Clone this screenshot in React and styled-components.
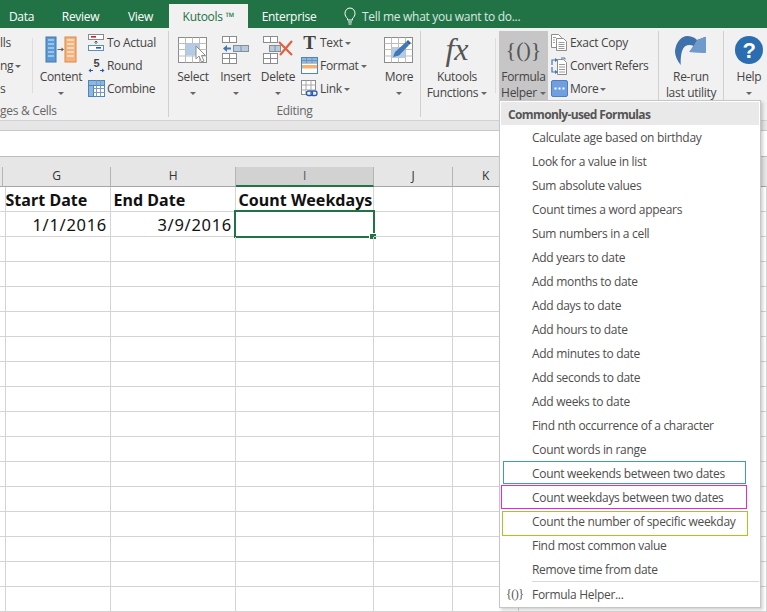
import React from "react";
import styled, { createGlobalStyle } from "styled-components";

const Global = createGlobalStyle`
  html, body { margin: 0; padding: 0; background: #fff; }
  * { box-sizing: border-box; }
`;

const UI = `"Open Sans", "Noto Sans", sans-serif`;

const Page = styled.div`
  position: relative;
  width: 767px;
  height: 612px;
  overflow: hidden;
  font-family: ${UI};
  font-size: 12px;
  letter-spacing: -0.3px;
  color: #444;
`;

const TabBar = styled.div`
  height: 28px;
  background: #217346;
  display: flex;
  align-items: flex-end;
  color: #fff;
`;
const Tab = styled.div`
  width: ${(p) => p.$w}px;
  margin-left: ${(p) => p.$ml || 0}px;
  height: 24px;
  display: flex;
  align-items: center;
  justify-content: center;
  background: ${(p) => (p.$active ? "#f1f1f1" : "transparent")};
  color: ${(p) => (p.$active ? "#217346" : "#fff")};
`;
const TellMe = styled.div`
  margin-left: 14px;
  height: 24px;
  display: flex;
  align-items: center;
  gap: 6px;
  color: #dbe9e1;
  white-space: nowrap;
`;

const Ribbon = styled.div`
  height: 93px;
  background: #f1f1f1;
  border-bottom: 1px solid #d2d2d2;
  display: flex;
  align-items: stretch;
`;
const Group = styled.div`
  width: ${(p) => p.$w}px;
  flex: none;
  display: flex;
  flex-direction: column;
  position: relative;
  overflow: hidden;
`;
const GroupBody = styled.div`
  height: 72px;
  margin-top: 3px;
  display: flex;
  align-items: flex-start;
`;
const GroupLabel = styled.div`
  height: 17px;
  line-height: 16px;
  display: flex;
  white-space: nowrap;
  color: #666;
  justify-content: ${(p) => (p.$start ? "flex-start" : "center")};
`;
const Divider = styled.div`
  width: 1px;
  flex: none;
  margin: 3px 0 3px;
  background: #d0d0d0;
`;
const SoftDivider = styled.div`
  width: 1px;
  height: 55px;
  flex: none;
  margin-top: 7px;
  margin-left: ${(p) => p.$ml || 0}px;
  background: #dcdcdc;
`;
const Large = styled.div`
  width: ${(p) => p.$w}px;
  margin-left: ${(p) => p.$ml || 0}px;
  height: 69px;
  flex: none;
  display: flex;
  flex-direction: column;
  align-items: center;
  background: ${(p) => (p.$on ? "#c6c6c6" : "transparent")};
`;
const LargeIcon = styled.div`
  height: 38px;
  display: flex;
  align-items: center;
  justify-content: center;
  flex: none;
`;
const LargeLine = styled.div`
  height: 16px;
  line-height: 16px;
  display: flex;
  align-items: center;
  justify-content: center;
  gap: 3px;
  white-space: nowrap;
`;
const Caret = styled.span`
  display: inline-block;
  width: 0;
  height: 0;
  border-left: 3px solid transparent;
  border-right: 3px solid transparent;
  border-top: 3px solid #666;
  margin-top: 1px;
`;
const Stack = styled.div`
  width: ${(p) => p.$w}px;
  margin-left: ${(p) => p.$ml || 0}px;
  flex: none;
  display: flex;
  flex-direction: column;
  overflow: hidden;
`;
const SmallRow = styled.div`
  height: 23px;
  display: flex;
  align-items: center;
  gap: 2px;
  white-space: nowrap;
`;
const SmallIcon = styled.span`
  width: 17px;
  height: 17px;
  flex: none;
  display: flex;
  align-items: center;
  justify-content: center;
`;
const SerifGlyph = styled.span`
  font-family: "Liberation Serif", serif;
  font-weight: ${(p) => p.$weight || 400};
  font-style: ${(p) => (p.$italic ? "italic" : "normal")};
  font-size: ${(p) => p.$size}px;
  line-height: 1;
  letter-spacing: 0;
  margin-top: ${(p) => p.$mt || 0}px;
  color: ${(p) => p.$c || "#555"};
`;

const Strip = styled.div`
  height: 10px;
  background: #e6e6e6;
  border-bottom: 1px solid #c8c8c8;
`;
const FormulaBar = styled.div`
  height: 26px;
  background: #fff;
  border-bottom: 1px solid #bdbdbd;
`;
const HeaderGap = styled.div`
  height: 10px;
  background: #e6e6e6;
`;
const Grid = styled.div`
  display: grid;
  grid-template-columns: 3px 108px 125px 138px 79px 66px 1fr;
`;
const ColHead = styled.div`
  height: 20px;
  line-height: 18px;
  background: ${(p) => (p.$sel ? "#d2d2d2" : "#e6e6e6")};
  border-right: 1px solid ${(p) => (p.$last ? "transparent" : "#b4b4b4")};
  border-bottom: ${(p) => (p.$sel ? "2px solid #217346" : "1px solid #a6a6a6")};
  text-align: center;
  font-size: 12px;
  color: ${(p) => (p.$sel ? "#555" : "#333")};
`;
const Cell = styled.div`
  position: relative;
  height: 25px;
  border-right: 1px solid #d4d4d4;
  border-bottom: 1px solid #d4d4d4;
  padding: 0 ${(p) => (p.$num ? 3 : 2.5)}px;
  line-height: 26px;
  font-family: "Noto Sans", "Open Sans", sans-serif;
  font-size: ${(p) => (p.$bold ? 16 : 16.5)}px;
  letter-spacing: ${(p) => (p.$bold ? "0.05px" : "0.7px")};
  font-weight: ${(p) => (p.$bold ? 700 : 400)};
  color: #111;
  text-align: ${(p) => (p.$num ? "right" : "left")};
  white-space: nowrap;
`;
const CellCursor = styled.div`
  position: absolute;
  top: -2px;
  left: -2px;
  right: -2px;
  bottom: -2px;
  border: 2px solid #217346;
`;
const FillHandle = styled.div`
  position: absolute;
  right: -3px;
  bottom: -3px;
  width: 6px;
  height: 5px;
  background: #217346;
  outline: 1px solid #fff;
`;

const Menu = styled.div`
  position: absolute;
  left: 499px;
  top: 100px;
  width: 262px;
  height: 508px;
  background: #fff;
  border: 1px solid #c6c6c6;
  padding: 1px;
  box-shadow: 2px 2px 3px rgba(0, 0, 0, 0.18);
`;
const MenuHeader = styled.div`
  height: 23px;
  line-height: 25px;
  padding-left: 7px;
  background: #e9e9e9;
  font-weight: 700;
  letter-spacing: -0.62px;
  color: #555;
`;
const MenuItem = styled.div`
  position: relative;
  height: 24px;
  line-height: 25px;
  padding-left: 31px;
  color: #4d4d4d;
  white-space: nowrap;
`;
const Ring = styled.div`
  position: absolute;
  left: ${(p) => p.$l}px;
  top: ${(p) => p.$t}px;
  width: ${(p) => p.$w}px;
  height: ${(p) => p.$h}px;
  border: 1px solid ${(p) => p.$c};
`;
const MenuSep = styled.div`
  height: 1px;
  margin-left: 31px;
  background: #d9d9d9;
`;
const FootIcon = styled.span`
  position: absolute;
  left: 5px;
  top: 0;
  font-family: "Liberation Serif", serif;
  font-size: 12px;
  letter-spacing: -0.5px;
  color: #555;
`;

const ContentIcon = () => (
  <svg width="32" height="28" viewBox="0 0 32 28">
    <rect x="1" y="1" width="10" height="25" fill="#5b9bd5" stroke="#3e78b0" />
    {[4, 8, 12, 16, 20].map((y) => <rect key={y} x="3" y={y - 1} width="6" height="2" fill="#9cc3e6" />)}
    <rect x="20" y="1" width="11" height="25" fill="#f4b183" stroke="#e08a3c" />
    {[4, 8, 12, 16, 20].map((y) => <rect key={y} x="22" y={y - 1} width="7" height="2" fill="#f9d9b0" />)}
    <path d="M12.5 13.5h5" stroke="#666" />
    <path d="M19 13.5l-2.5-2v4z" fill="#555" />
  </svg>
);
const ToActualIcon = () => (
  <svg width="17" height="17" viewBox="0 0 17 17">
    <rect x=".5" y=".5" width="15" height="5" fill="#fff" stroke="#8a8a8a" />
    <rect x="3" y="2" width="5" height="1.6" fill="#c8242b" />
    <rect x=".5" y="11.5" width="15" height="5" fill="#fff" stroke="#5b8ec4" />
    <rect x="8" y="13" width="5" height="1.6" fill="#2a5caa" />
    <path d="M8 10V7M6.5 8.5L8 7l1.5 1.5" stroke="#555" fill="none" />
  </svg>
);
const RoundIcon = () => (
  <svg width="17" height="17" viewBox="0 0 17 17">
    <text x="8.5" y="10" textAnchor="middle" fontFamily="Liberation Sans" fontWeight="700" fontSize="11" fill="#444">5</text>
    <path d="M2 13.5h3M12 13.5h3" stroke="#2a5caa" />
    <path d="M.5 13.5l2.5-2v4zM16.5 13.5l-2.5-2v4z" fill="#2a5caa" />
  </svg>
);
const CombineIcon = () => (
  <svg width="17" height="17" viewBox="0 0 17 17">
    <rect x=".5" y=".5" width="16" height="16" fill="#fff" stroke="#4a86c0" />
    <rect x=".5" y=".5" width="5" height="16" fill="#8fb6dc" stroke="#4a86c0" />
    <rect x=".5" y=".5" width="16" height="5" fill="#8fb6dc" stroke="#4a86c0" />
    <path d="M5.5 8.5h11M5.5 12.5h11M8.5 5.5v11M12.5 5.5v11M8.5.5v5M12.5.5v5" stroke="#7a9cc0" fill="none" />
  </svg>
);
const GridBase = ({ children }) => (
  <svg width="30" height="27" viewBox="0 0 30 27">
    <rect x=".5" y=".5" width="28" height="25" fill="#fff" stroke="#8c8c8c" />
    <path d="M.5 6.5h28M.5 12.5h28M.5 19h28M7.5.5v25M14.5.5v25M21.5.5v25" stroke="#bdbdbd" fill="none" />
    {children}
  </svg>
);
const SelectIcon = () => (
  <GridBase>
    <rect x="7.5" y="6.5" width="14" height="12" fill="#b3cbe3" />
    <path d="M18 9v13l3-3 2.5 6 2.5-1-2.5-5.5H27.5z" fill="#fff" stroke="#8c8c8c" strokeLinejoin="round" />
  </GridBase>
);
const MoreIcon = () => (
  <GridBase>
    <rect x="7.5" y="10" width="14" height="11" fill="#b3cbe3" />
    <path d="M9 20l2-5L22 5l3 3-10 10.5z" fill="#3f78b5" />
    <path d="M22 5l2-2 3 3-2 2z" fill="#2f66a3" />
  </GridBase>
);
const InsertIcon = () => (
  <svg width="27" height="28" viewBox="0 0 27 28">
    <rect x=".5" y=".5" width="14" height="6" fill="#fff" stroke="#8c8c8c" />
    <path d="M7.5.5v6" stroke="#8c8c8c" />
    <rect x="11.5" y="9.5" width="15" height="6" fill="#b3cbe3" stroke="#8c8c8c" />
    <path d="M19 9.5v6" stroke="#8c8c8c" />
    <path d="M3 12.5h6" stroke="#3f78b5" strokeWidth="2" />
    <path d="M1 12.5l4-3.5v7z" fill="#3f78b5" />
    <rect x=".5" y="17.5" width="14" height="10" fill="#fff" stroke="#8c8c8c" />
    <path d="M7.5 17.5v10M.5 22.5h14" stroke="#8c8c8c" />
  </svg>
);
const DeleteIcon = () => (
  <svg width="31" height="28" viewBox="0 0 31 28">
    <rect x=".5" y=".5" width="14" height="6" fill="#fff" stroke="#8c8c8c" />
    <path d="M7.5.5v6" stroke="#8c8c8c" />
    <rect x="6.5" y="9.5" width="11" height="6" fill="#b3cbe3" stroke="#8c8c8c" />
    <path d="M12 9.5v6" stroke="#8c8c8c" />
    <rect x=".5" y="17.5" width="14" height="10" fill="#fff" stroke="#8c8c8c" />
    <path d="M7.5 17.5v10M.5 22.5h14" stroke="#8c8c8c" />
    <path d="M16 6l13 13M29 5L17 19" stroke="#e0603f" strokeWidth="2.2" />
  </svg>
);
const FormatIcon = () => (
  <svg width="17" height="17" viewBox="0 0 17 17">
    <rect x=".5" y=".5" width="16" height="16" fill="#fff" stroke="#4a86c0" />
    <rect x="1" y="1" width="15" height="5" fill="#8fb6dc" />
    <path d="M1 3.5h15M5.5 1v5M11 1v5" stroke="#6a94c0" />
    <rect x="1" y="8" width="15" height="3.5" fill="#f4b26b" />
    <rect x="1" y="6" width="15" height="1" fill="#c0c0c0" />
  </svg>
);
const LinkIcon = () => (
  <svg width="17" height="17" viewBox="0 0 17 17">
    <rect x=".5" y=".5" width="14" height="14" fill="#fff" stroke="#8c8c8c" />
    <path d="M.5 5h14M.5 10h14M5 .5v14M10 .5v14" stroke="#a8a8a8" />
    <rect x="5" y="10" width="12" height="7" fill="#f1f1f1" />
    <rect x="5.5" y="11" width="6" height="4.5" rx="2" fill="none" stroke="#2a5caa" strokeWidth="1.3" />
    <rect x="10" y="11" width="6" height="4.5" rx="2" fill="none" stroke="#2a5caa" strokeWidth="1.3" />
  </svg>
);
const CopyIcon = () => (
  <svg width="17" height="17" viewBox="0 0 17 17">
    <path d="M.5.5h7l3 3v10H.5z" fill="#fff" stroke="#8c8c8c" />
    <path d="M5.5 4.5h7l3 3v9h-10z" fill="#fff" stroke="#8c8c8c" />
    <path d="M7.5 8.5h6M7.5 10.5h6M7.5 12.5h6M7.5 14.5h6M2 3.5h3M2 6h2M2 8.5h2" stroke="#9a9a9a" />
  </svg>
);
const ConvertIcon = () => (
  <svg width="17" height="18" viewBox="0 0 17 18">
    <path d="M6.5 2.5h6l3 3v12h-9z" fill="#fff" stroke="#8c8c8c" />
    <path d="M8 7.5h6M8 10h6M8 12.5h6M8 15h6" stroke="#9a9a9a" />
    <path d="M1 8V3h4M1 10v5h4" stroke="#3f78b5" fill="none" strokeWidth="1.2" />
    <path d="M4 1l3 2-3 2zM4 13l3 2-3 2z" fill="#3f78b5" />
    <path d="M10 1h4v1.5" stroke="#3f78b5" fill="none" />
  </svg>
);
const DotsIcon = () => (
  <svg width="17" height="17" viewBox="0 0 17 17">
    <rect x=".5" y=".5" width="16" height="16" rx="1.5" fill="#6f9fe0" stroke="#4a7fc4" />
    <rect x="3.5" y="7.5" width="2" height="2" fill="#fff" />
    <rect x="7.5" y="7.5" width="2" height="2" fill="#fff" />
    <rect x="11.5" y="7.5" width="2" height="2" fill="#fff" />
  </svg>
);
const RerunIcon = () => (
  <svg width="32" height="31" viewBox="0 0 32 31">
    <path d="M5.7 30C1 24 -1 18 .5 13 2 6 7 1 12 1c4 0 7 1 10 4L30.7 1.700V17.700L14.300 17l4.200-6C16 9.500 13 9.500 10.500 11 7 13 5.500 20 5.700 30z" fill="#3f72ab" />
    <path d="M22 5L30.700 1.700V17.700L14.300 17l4.200-6z" fill="#6f9bcc" />
  </svg>
);
const HelpIcon = () => (
  <svg width="28" height="28" viewBox="0 0 28 28">
    <circle cx="14" cy="14" r="14" fill="#2a6db0" />
    <text x="14" y="22" textAnchor="middle" fontFamily="Liberation Sans" fontWeight="700" fontSize="22" fill="#fff">?</text>
  </svg>
);
const BulbIcon = () => (
  <svg width="12" height="18" viewBox="0 0 12 18">
    <path d="M3.500 11.500C2 10 1 8.500 1 6.500 1 3.500 3 1 6 1s5 2.500 5 5.500c0 2-1 3.500-2.500 5v1.500h-5z" fill="none" stroke="#fff" />
    <path d="M4 15h4M4.500 17h3" stroke="#fff" />
  </svg>
);

const COLS = ["", "G", "H", "I", "J", "K", ""];
const rows = Array.from({ length: 17 }, (_, r) => r);
const cellData = {
  "0-1": { text: "Start Date", bold: true },
  "0-2": { text: "End Date", bold: true },
  "0-3": { text: "Count Weekdays", bold: true },
  "1-1": { text: "1/1/2016", num: true },
  "1-2": { text: "3/9/2016", num: true },
};

const items = [
  "Calculate age based on birthday",
  "Look for a value in list",
  "Sum absolute values",
  "Count times a word appears",
  "Sum numbers in a cell",
  "Add years to date",
  "Add months to date",
  "Add days to date",
  "Add hours to date",
  "Add minutes to date",
  "Add seconds to date",
  "Add weeks to date",
  "Find nth occurrence of a character",
  "Count words in range",
  "Count weekends between two dates",
  "Count weekdays between two dates",
  "Count the number of specific weekday",
  "Find most common value",
  "Remove time from date",
];
const rings = {
  "Count weekends between two dates": { $c: "#3d94e6", $l: 2, $t: 0, $w: 243, $h: 23 },
  "Count weekdays between two dates": { $c: "#f21cf0", $l: 0, $t: 0, $w: 246, $h: 24 },
  "Count the number of specific weekday": { $c: "#a4c81e", $l: 1, $t: 2, $w: 246, $h: 25 },
};

export default function App() {
  return (
    <Page>
      <Global />
      <TabBar>
        <Tab $w={43}>Data</Tab>
        <Tab $w={75}>Review</Tab>
        <Tab $w={45}>View</Tab>
        <Tab $w={79} $ml={6} $active>Kutools ™</Tab>
        <Tab $w={82}>Enterprise</Tab>
        <TellMe><BulbIcon />Tell me what you want to do...</TellMe>
      </TabBar>

      <Ribbon>
        <Group $w={168}>
          <GroupBody>
            <Stack $w={32}>
              <SmallRow>lls</SmallRow>
              <SmallRow>ng<Caret /></SmallRow>
              <SmallRow>s</SmallRow>
            </Stack>
            <SoftDivider />
            <Large $w={46} $ml={5}>
              <LargeIcon><ContentIcon /></LargeIcon>
              <LargeLine>Content</LargeLine>
              <LargeLine><Caret /></LargeLine>
            </Large>
            <Stack $w={78} $ml={4}>
              <SmallRow><SmallIcon><ToActualIcon /></SmallIcon>To Actual</SmallRow>
              <SmallRow><SmallIcon><RoundIcon /></SmallIcon>Round</SmallRow>
              <SmallRow><SmallIcon><CombineIcon /></SmallIcon>Combine</SmallRow>
            </Stack>
          </GroupBody>
          <GroupLabel $start>ges &amp; Cells</GroupLabel>
        </Group>
        <Divider />
        <Group $w={251}>
          <GroupBody>
            <Large $w={46} $ml={1}>
              <LargeIcon><SelectIcon /></LargeIcon>
              <LargeLine>Select</LargeLine>
              <LargeLine><Caret /></LargeLine>
            </Large>
            <Large $w={39}>
              <LargeIcon><InsertIcon /></LargeIcon>
              <LargeLine>Insert</LargeLine>
              <LargeLine><Caret /></LargeLine>
            </Large>
            <Large $w={40} $ml={3}>
              <LargeIcon><DeleteIcon /></LargeIcon>
              <LargeLine>Delete</LargeLine>
              <LargeLine><Caret /></LargeLine>
            </Large>
            <Stack $w={72} $ml={3}>
              <SmallRow><SmallIcon><SerifGlyph $size={19} $weight={700} $c="#444">T</SerifGlyph></SmallIcon>Text<Caret /></SmallRow>
              <SmallRow><SmallIcon><FormatIcon /></SmallIcon>Format<Caret /></SmallRow>
              <SmallRow><SmallIcon><LinkIcon /></SmallIcon>Link<Caret /></SmallRow>
            </Stack>
            <Large $w={36} $ml={8}>
              <LargeIcon><MoreIcon /></LargeIcon>
              <LargeLine>More</LargeLine>
              <LargeLine><Caret /></LargeLine>
            </Large>
          </GroupBody>
          <GroupLabel>Editing</GroupLabel>
        </Group>
        <Divider />
        <Group $w={237}>
          <GroupBody>
            <Large $w={70} $ml={1}>
              <LargeIcon><SerifGlyph $size={32} $italic $mt={-3} $c="#555">fx</SerifGlyph></LargeIcon>
              <LargeLine>Kutools</LargeLine>
              <LargeLine>Functions<Caret /></LargeLine>
            </Large>
            <SoftDivider $ml={3} />
            <Large $w={49} $ml={3} $on>
              <LargeIcon><SerifGlyph $size={22} $c="#555">{"{()}"}</SerifGlyph></LargeIcon>
              <LargeLine>Formula</LargeLine>
              <LargeLine>Helper<Caret /></LargeLine>
            </Large>
            <Stack $w={108} $ml={3}>
              <SmallRow><SmallIcon><CopyIcon /></SmallIcon>Exact Copy</SmallRow>
              <SmallRow><SmallIcon><ConvertIcon /></SmallIcon>Convert Refers</SmallRow>
              <SmallRow><SmallIcon><DotsIcon /></SmallIcon>More<Caret /></SmallRow>
            </Stack>
          </GroupBody>
        </Group>
        <Divider />
        <Group $w={64}>
          <GroupBody>
            <Large $w={60} $ml={2}>
              <LargeIcon><RerunIcon /></LargeIcon>
              <LargeLine>Re-run</LargeLine>
              <LargeLine>last utility</LargeLine>
            </Large>
          </GroupBody>
        </Group>
        <Divider />
        <Group $w={43}>
          <GroupBody>
            <Large $w={36} $ml={7}>
              <LargeIcon><HelpIcon /></LargeIcon>
              <LargeLine>Help</LargeLine>
              <LargeLine><Caret /></LargeLine>
            </Large>
          </GroupBody>
        </Group>
      </Ribbon>

      <Strip />
      <FormulaBar />
      <HeaderGap />
      <Grid>
        {COLS.map((c, i) => (
          <ColHead key={i} $sel={c === "I"} $last={i === COLS.length - 1}>{c}</ColHead>
        ))}
        {rows.map((r) =>
          COLS.map((_, c) => {
            const d = cellData[`${r}-${c}`] || {};
            const selected = r === 1 && c === 3;
            return (
              <Cell key={`${r}-${c}`} $bold={d.bold} $num={d.num}>
                {d.text}
                {selected && <CellCursor><FillHandle /></CellCursor>}
              </Cell>
            );
          })
        )}
      </Grid>

      <Menu>
        <MenuHeader>Commonly-used Formulas</MenuHeader>
        {items.map((t) => (
          <MenuItem key={t}>
            {t}
            {rings[t] && <Ring {...rings[t]} />}
          </MenuItem>
        ))}
        <MenuSep />
        <MenuItem><FootIcon>{"{()}"}</FootIcon>Formula Helper...</MenuItem>
      </Menu>
    </Page>
  );
}
